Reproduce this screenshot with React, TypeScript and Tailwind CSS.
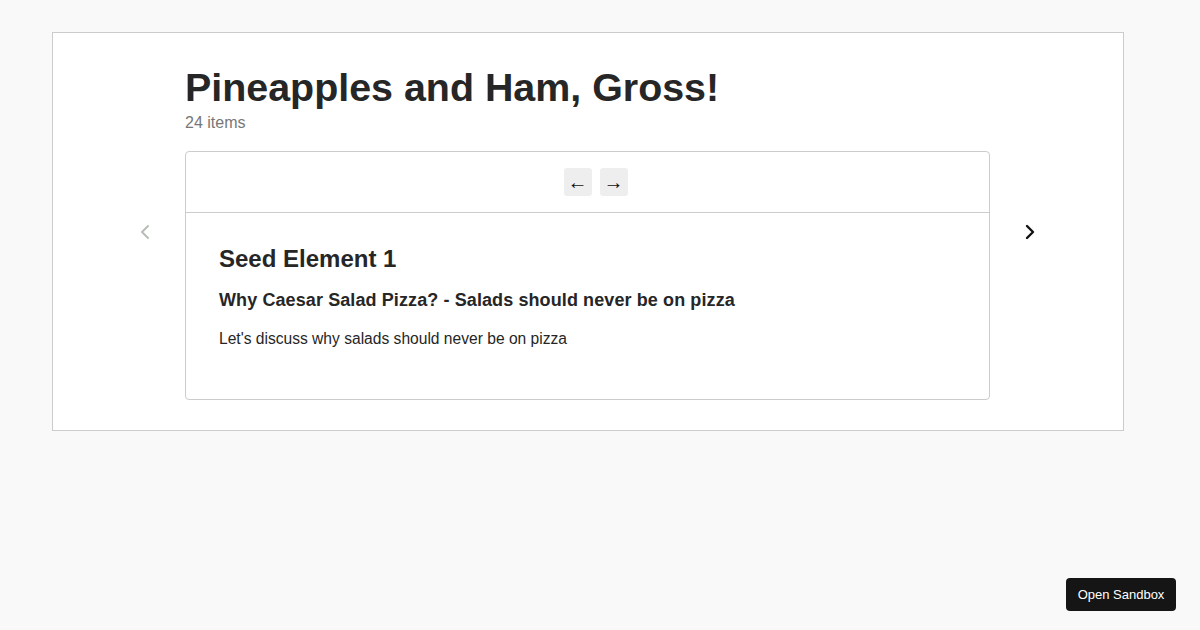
import React from "react";
import { ChevronLeft, ChevronRight } from "lucide-react";

export default function App() {
  return (
    <div
      className="min-h-[630px] w-full bg-[#f9f9f9] pt-[32px] text-[#222]"
      style={{ fontFamily: '"Liberation Sans", Arial, sans-serif' }}
    >
      <div className="ml-[52px] flex w-[1072px] items-center border border-[#cccccc] bg-white">
        <div className="flex w-[132px] justify-end pr-[28px]">
          <ChevronLeft size={24} strokeWidth={2} className="text-[#b8bdb6]" />
        </div>
        <div className="flex-1 pt-[30px] pb-[30px]">
          <h1 className="text-[39.4px] font-bold leading-[48px] text-[#262626]">
            Pineapples and Ham, Gross!
          </h1>
          <div className="text-[16px] leading-[24px] text-[#777777]">24 items</div>
          <div className="mt-[16px] rounded-[4px] border border-[#cccccc]">
            <div className="flex justify-center gap-[8px] border-b border-[#cccccc] py-4 pl-[16px]">
              <button className="flex h-7 w-7 items-center justify-center rounded-[3px] bg-[#eeeeee] text-[20px] leading-none text-[#111]">
                ←
              </button>
              <button className="flex h-7 w-7 items-center justify-center rounded-[3px] bg-[#eeeeee] text-[20px] leading-none text-[#111]">
                →
              </button>
            </div>
            <div className="px-[33px] pt-[32px] pb-[48px]">
              <h2 className="text-[24px] font-bold leading-[28px] text-[#262626]">Seed Element 1</h2>
              <h3 className="mt-[16px] text-[18px] font-bold leading-[22px] tracking-[0.1px] text-[#262626]">
                Why Caesar Salad Pizza? - Salads should never be on pizza
              </h3>
              <p className="mt-[16px] text-[15.6px] leading-[24px] text-[#262626]">
                Let's discuss why salads should never be on pizza
              </p>
            </div>
          </div>
        </div>
        <div className="flex w-[133px] justify-start pl-[28px]">
          <ChevronRight size={24} strokeWidth={2.4} className="text-[#111]" />
        </div>
      </div>
      <button className="fixed right-[24px] bottom-[19px] h-[33px] w-[110px] rounded-[4px] bg-[#151515] text-[13px] text-white">
        Open Sandbox
      </button>
    </div>
  );
}
